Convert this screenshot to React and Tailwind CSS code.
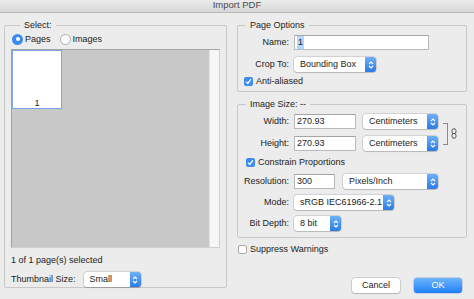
import React from "react";

const font = { fontFamily: '"Liberation Sans", Arial, sans-serif' };

function Stepper() {
  return (
    <span className="flex h-full w-[11px] shrink-0 items-center justify-center rounded-r-[3px] bg-gradient-to-b from-[#6eb0f7] to-[#2a7be4]">
      <svg width="6" height="10" viewBox="0 0 6 10" fill="none" stroke="white" strokeWidth="1.1">
        <path d="M1 4 L3 2 L5 4" />
        <path d="M1 6 L3 8 L5 6" />
      </svg>
    </span>
  );
}

function Popup({ value, width }) {
  return (
    <div
      className={`flex h-[15px] items-center rounded-[3px] bg-white shadow-[0_0_0_0.5px_rgba(0,0,0,0.22),0_1px_1px_rgba(0,0,0,0.12)] ${width}`}
    >
      <span className="flex-1 truncate pl-[6px] leading-[15px] text-[#222]">{value}</span>
      <Stepper />
    </div>
  );
}

function Field({ value, width, selected }) {
  return (
    <div
      className={`flex h-[15px] items-center border border-[#b9b9b9] border-t-[#a5a5a5] bg-white pl-[2px] leading-[13px] text-[#222] ${width}`}
    >
      {selected ? <span className="bg-[#b4d5fd] px-[1px]">{value}</span> : value}
    </div>
  );
}

function Check({ checked, label, className = "" }) {
  return (
    <div className={`flex h-[10px] items-center gap-[3px] ${className}`}>
      {checked ? (
        <span className="flex h-[9px] w-[9px] items-center justify-center rounded-[2px] bg-[#3b8cf0]">
          <svg width="7" height="7" viewBox="0 0 7 7" fill="none" stroke="white" strokeWidth="1.3">
            <path d="M1 3.6 L2.8 5.4 L6 1.2" />
          </svg>
        </span>
      ) : (
        <span className="h-[9px] w-[9px] rounded-[2px] border border-[#aaa] bg-white" />
      )}
      <span className="leading-[10px] text-[#222]">{label}</span>
    </div>
  );
}

function Radio({ checked, label }) {
  return (
    <div className="flex items-center gap-[2px]">
      {checked ? (
        <span className="flex h-[11px] w-[11px] items-center justify-center rounded-full bg-[#3b8cf0]">
          <span className="h-[4px] w-[4px] rounded-full bg-white" />
        </span>
      ) : (
        <span className="h-[11px] w-[11px] rounded-full border border-[#aaa] bg-white" />
      )}
      <span className="leading-[12px] text-[#222]">{label}</span>
    </div>
  );
}

function Row({ label, children, className = "" }) {
  return (
    <div className={`flex h-[15px] items-center ${className}`}>
      <span className="w-[52px] shrink-0 pr-[1px] text-right text-[#222]">{label}</span>
      <div className="ml-[4px] flex items-center">{children}</div>
    </div>
  );
}

export default function App() {
  return (
    <div className="flex h-[299px] w-[474px] flex-col overflow-hidden bg-[#ececec] text-[9px]" style={font}>
      <div className="flex h-[13px] items-center justify-center border-b border-[#b8b8b8] bg-gradient-to-b from-[#ececec] to-[#d6d6d6] pb-[2px] text-[9.5px] text-[#4a4a4a]">
        Import PDF
      </div>

      <div className="flex gap-[10px] pl-[4px] pt-[6px]">
        <fieldset className="h-[269px] w-[222px] rounded-[2px] border border-[#c8c8c8] px-[6px]">
          <legend className="ml-[9px] px-[4px] leading-[12px] text-[#222]">Select:</legend>
          <div className="mt-[2px] flex h-[12px] items-center gap-[9px] pl-[1px]">
            <Radio checked label="Pages" />
            <Radio label="Images" />
          </div>
          <div className="mt-[4px] flex h-[199px] w-[209px] border border-[#a3a3a3] border-b-[#d0d0d0] border-r-[#d0d0d0] bg-[#c8c8c8]">
            <div className="flex-1">
              <div className="flex h-[59px] w-[50px] items-end justify-center border border-[#7ea6e6] bg-white leading-[10px] text-[#222]">
                1
              </div>
            </div>
            <div className="w-[10px] border-l border-[#e2e2e2] bg-[#f6f6f6]" />
          </div>
          <div className="mt-[6px] leading-[12px] text-[#222]">1 of 1 page(s) selected</div>
          <div className="mt-[6px] flex items-center gap-[8px]">
            <span className="text-[#222]">Thumbnail Size:</span>
            <Popup value="Small" width="w-[57px]" />
          </div>
        </fieldset>

        <div className="flex w-[230px] flex-col">
          <fieldset className="h-[73px] rounded-[2px] border border-[#c8c8c8]">
            <legend className="ml-[8px] px-[4px] leading-[12px] text-[#222]">Page Options</legend>
            <Row label="Name:" className="mt-[4px]">
              <Field value="1" width="w-[135px]" selected />
            </Row>
            <Row label="Crop To:" className="mt-[7px]">
              <Popup value="Bounding Box" width="w-[82px]" />
            </Row>
            <Check checked label="Anti-aliased" className="ml-[6px] mt-[4px]" />
          </fieldset>

          <fieldset className="mt-[6px] h-[140px] rounded-[2px] border border-[#c8c8c8]">
            <legend className="ml-[8px] px-[4px] leading-[12px] text-[#222]">Image Size: --</legend>
            <div className="mt-[4px] flex">
              <div className="flex flex-col gap-[7px]">
                <Row label="Width:">
                  <Field value="270.93" width="w-[62px]" />
                  <div className="ml-[7px]">
                    <Popup value="Centimeters" width="w-[75px]" />
                  </div>
                </Row>
                <Row label="Height:">
                  <Field value="270.93" width="w-[62px]" />
                  <div className="ml-[7px]">
                    <Popup value="Centimeters" width="w-[75px]" />
                  </div>
                </Row>
              </div>
              <div className="ml-[5px] mt-[9px] h-[22px] w-[5px] border border-l-0 border-[#8a8a8a]" />
              <svg className="ml-[3px] mt-[14px]" width="6" height="11" viewBox="0 0 6 11" fill="none" stroke="#555" strokeWidth="1">
                <rect x="1" y="0.7" width="4" height="5" rx="2" />
                <rect x="1" y="5.3" width="4" height="5" rx="2" />
              </svg>
            </div>
            <Check checked label="Constrain Proportions" className="ml-[8px] mt-[6px]" />
            <Row label="Resolution:" className="mt-[7px]">
              <Field value="300" width="w-[41px]" />
              <div className="ml-[8px]">
                <Popup value="Pixels/Inch" width="w-[95px]" />
              </div>
            </Row>
            <Row label="Mode:" className="mt-[6px]">
              <Popup value="sRGB IEC61966-2.1" width="w-[100px]" />
            </Row>
            <Row label="Bit Depth:" className="mt-[6px]">
              <Popup value="8 bit" width="w-[47px]" />
            </Row>
          </fieldset>

          <Check label="Suppress Warnings" className="ml-[1px] mt-[6px]" />

          <div className="mt-[24px] flex justify-end gap-[14px] pr-[5px]">
            <button className="h-[15px] w-[48px] rounded-[3px] bg-white leading-[15px] text-[#222] shadow-[0_0_0_0.5px_rgba(0,0,0,0.25),0_1px_1px_rgba(0,0,0,0.12)]">
              Cancel
            </button>
            <button className="h-[15px] w-[48px] rounded-[3px] bg-gradient-to-b from-[#6cb4fb] to-[#1b7ff8] leading-[15px] text-white shadow-[0_0_0_0.5px_rgba(0,60,160,0.35)]">
              OK
            </button>
          </div>
        </div>
      </div>
    </div>
  );
}
